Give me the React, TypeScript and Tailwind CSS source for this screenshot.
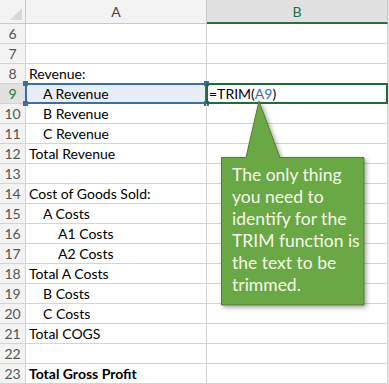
import React from "react";

type Row = { n: number; text?: string; indent?: number; bold?: boolean };

const rows: Row[] = [
  { n: 6 },
  { n: 7 },
  { n: 8, text: "Revenue:" },
  { n: 9, text: "A Revenue", indent: 1 },
  { n: 10, text: "B Revenue", indent: 1 },
  { n: 11, text: "C Revenue", indent: 1 },
  { n: 12, text: "Total Revenue" },
  { n: 13 },
  { n: 14, text: "Cost of Goods Sold:" },
  { n: 15, text: "A Costs", indent: 1 },
  { n: 16, text: "A1 Costs", indent: 2 },
  { n: 17, text: "A2 Costs", indent: 2 },
  { n: 18, text: "Total A Costs" },
  { n: 19, text: "B Costs", indent: 1 },
  { n: 20, text: "C Costs", indent: 1 },
  { n: 21, text: "Total COGS" },
  { n: 22 },
  { n: 23, text: "Total Gross Profit", bold: true },
];

const indentClass = ["pl-[3px]", "pl-[17px]", "pl-[32px]"];

const calloutLines = [
  "The only thing",
  "you need to",
  "identify for the",
  "TRIM function is",
  "the text to be",
  "trimmed.",
];

function Handle({ className }: { className: string }) {
  return <div className={`absolute h-[5px] w-[5px] bg-[#3b6ea5] ${className}`} />;
}

export default function App() {
  return (
    <div className="relative h-[384px] w-[389px] overflow-hidden bg-white font-['Lato','Liberation_Sans',sans-serif] text-[14px] text-black">
      <div className="grid grid-cols-[26px_181px_181px_1px]">
        {/* header row */}
        <div className="relative h-[24px] border-b border-r border-[#c8c8c8] bg-[#f3f3f3]">
          <svg className="absolute bottom-[3px] right-[3px]" width="12" height="12" viewBox="0 0 12 12">
            <path d="M12 0 L12 12 L0 12 Z" fill="#d8d8d8" />
          </svg>
        </div>
        <div className="flex h-[24px] items-center justify-center border-b border-r border-[#c8c8c8] bg-[#f3f3f3] text-[14px] text-[#444]">
          A
        </div>
        <div className="flex h-[24px] items-center justify-center border-b-2 border-r border-b-[#217346] border-r-[#c8c8c8] bg-[#e1e1e1] text-[14px] text-[#217346]">
          B
        </div>
        <div className="h-[24px] bg-[#e6e6e6]" />

        {rows.map((r) => (
          <React.Fragment key={r.n}>
            <div
              className={`flex h-[20px] items-center justify-center border-b border-r border-[#d4d4d4] text-[14px] ${
                r.n === 9 ? "bg-[#e1e1e1] text-[#217346]" : "bg-[#f3f3f3] text-[#555]"
              }`}
            >
              {r.n}
            </div>
            <div
              className={`relative flex h-[20px] items-center whitespace-nowrap border-b border-r border-[#d4d4d4] ${
                indentClass[r.indent ?? 0]
              } ${r.bold ? "font-bold" : ""} ${r.n === 9 ? "bg-[#e8eef7]" : ""}`}
            >
              {r.n === 9 && (
                <>
                  <div className="absolute -left-px -top-px h-[21px] w-[182px] border-2 border-[#3b6ea5]" />
                  <Handle className="-left-[3px] -top-[3px]" />
                  <Handle className="-bottom-[3px] -left-[3px]" />
                  <Handle className="-right-[3px] -top-[3px]" />
                  <Handle className="-bottom-[3px] -right-[3px]" />
                </>
              )}
              <span className="relative">{r.text}</span>
            </div>
            <div className="relative flex h-[20px] items-center border-b border-r border-[#d4d4d4] pl-[2px]">
              {r.n === 9 && (
                <>
                  <div className="absolute -left-px -top-px h-[21px] w-[182px] border-2 border-[#1e6b3c]" />
                  <span className="relative">
                    =TRIM(<span className="text-[#3b6ea5]">A9</span>)
                  </span>
                </>
              )}
            </div>
            <div className="h-[20px] bg-[#e6e6e6]" />
          </React.Fragment>
        ))}
      </div>

      {/* callout */}
      <svg className="absolute left-0 top-0" width="389" height="384" viewBox="0 0 389 384">
        <defs>
          <filter id="sh" x="-20%" y="-20%" width="140%" height="140%">
            <feDropShadow dx="2" dy="2" stdDeviation="2" floodColor="#000" floodOpacity="0.35" />
          </filter>
        </defs>
        <path
          d="M259 101 L280 157.5 L364 157.5 L364 305 L221.5 305 L221.5 157.5 L246 157.5 Z"
          fill="#6aa744"
          stroke="#4f7f31"
          strokeWidth="1"
          filter="url(#sh)"
        />
      </svg>
      <div className="absolute left-[232px] top-[164px] whitespace-nowrap text-[17.5px] leading-[22px] text-[#f4fbe8]">
        {calloutLines.map((line) => (
          <div key={line}>{line}</div>
        ))}
      </div>
    </div>
  );
}
